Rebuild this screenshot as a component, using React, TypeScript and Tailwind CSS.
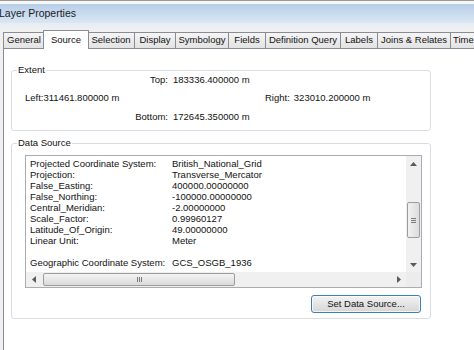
import type { FC } from "react";

const tabs: { label: string; w: number; active?: boolean }[] = [
	{ label: "General", w: 41 },
	{ label: "Source", w: 44, active: true },
	{ label: "Selection", w: 46 },
	{ label: "Display", w: 41 },
	{ label: "Symbology", w: 53 },
	{ label: "Fields", w: 37 },
	{ label: "Definition Query", w: 75 },
	{ label: "Labels", w: 37 },
	{ label: "Joins & Relates", w: 73 },
	{ label: "Time", w: 40 },
];

const rows: [string, string][] = [
	["Projected Coordinate System:", "British_National_Grid"],
	["Projection:", "Transverse_Mercator"],
	["False_Easting:", "400000.00000000"],
	["False_Northing:", "-100000.00000000"],
	["Central_Meridian:", "-2.00000000"],
	["Scale_Factor:", "0.99960127"],
	["Latitude_Of_Origin:", "49.00000000"],
	["Linear Unit:", "Meter"],
	["", ""],
	["Geographic Coordinate System:", "GCS_OSGB_1936"],
];

// small grip lines on scrollbar thumbs
const Grip: FC<{ vertical?: boolean }> = ({ vertical }) => (
	<div className={vertical ? "flex flex-col gap-[1px]" : "flex gap-[1px]"}>
		{[0, 1, 2].map((i) => (
			<div
				key={i}
				className={vertical ? "w-[5px] h-[1px] bg-[#7a7a7a]" : "w-[1px] h-[5px] bg-[#7a7a7a]"}
			/>
		))}
	</div>
);

const Arrow: FC<{ dir: "up" | "down" | "left" | "right" }> = ({ dir }) => {
	const pts = {
		up: "0,4 3.5,0 7,4",
		down: "0,0 3.5,4 7,0",
		left: "4,0 0,3.5 4,7",
		right: "0,0 4,3.5 0,7",
	}[dir];
	const vert = dir === "up" || dir === "down";
	return (
		<svg width={vert ? 7 : 4} height={vert ? 4 : 7} viewBox={vert ? "0 0 7 4" : "0 0 4 7"}>
			<polygon points={pts} fill="#5a5a5a" />
		</svg>
	);
};

const GroupBox: FC<{ label: string; className: string; children: React.ReactNode }> = ({
	label,
	className,
	children,
}) => (
	<div className={`relative ml-[7px] w-[420px] rounded-[3px] border border-[#d9dde2] ${className}`}>
		<span className="absolute left-[5px] -top-[7px] bg-white px-[1px] leading-[12px]">{label}</span>
		{children}
	</div>
);

const App: FC = () => {
	return (
		<div
			className="w-[474px] h-[350px] overflow-hidden bg-[#f0f0f0] flex flex-col text-[9.5px] text-[#111]"
			style={{ fontFamily: '"Liberation Sans", Arial, sans-serif' }}
		>
			{/* strip of the window behind */}
			<div className="h-[4px] bg-[#f7f7f7] border-t border-[#9a9a9a]" />

			{/* title bar */}
			<div className="h-[19px] bg-gradient-to-b from-[#b7cee8] to-[#dae7f4] flex items-center -ml-[1px] text-[10.5px] text-[#1b1b1b]">
				Layer Properties
			</div>
			<div className="h-[7px] bg-gradient-to-b from-[#e6edf5] to-[#f0f0f0]" />

			{/* tabs */}
			<div className="h-[18px] flex items-end pl-[3px]">
				{tabs.map((t, i) =>
					t.active ? (
						<div
							key={t.label}
							className="relative -mb-[1px] h-[19px] shrink-0 bg-white border-t border-l border-r border-[#898c95] flex justify-center pt-[2px] -mx-[1px]"
							style={{ width: t.w + 2 }}
						>
							{t.label}
						</div>
					) : (
						<div
							key={t.label}
							className={`h-[16px] shrink-0 bg-gradient-to-b from-[#f5f5f5] to-[#e3e3e3] border-t border-l border-[#898c95] flex items-center ${
								i === tabs.length - 1 ? "justify-start pl-[2px]" : "justify-center"
							} ${tabs[i - 1]?.active ? "border-l-0" : ""}`}
							style={{ width: t.w }}
						>
							{t.label}
						</div>
					),
				)}
			</div>

			{/* tab page */}
			<div className="flex-1 ml-[3px] bg-white border-l border-t border-[#898c95]">
				<GroupBox label="Extent" className="mt-[21px] h-[61px]">
					<div className="flex h-[11px] mt-[4px] items-center">
						<span className="w-[156px] text-right">Top:</span>
						<span className="ml-[5px]">183336.400000 m</span>
					</div>
					<div className="flex h-[11px] mt-[7px] items-center">
						<span className="ml-[13px] w-[240px]">Left:311461.800000 m</span>
						<span>Right:</span>
						<span className="ml-[4px]">323010.200000 m</span>
					</div>
					<div className="flex h-[11px] mt-[8px] items-center">
						<span className="w-[156px] text-right">Bottom:</span>
						<span className="ml-[5px]">172645.350000 m</span>
					</div>
				</GroupBox>

				<GroupBox label="Data Source" className="mt-[12px] h-[176px]">
					{/* list box */}
					<div className="ml-[13px] mt-[11px] w-[397px] h-[133px] border border-[#a9adb3] flex flex-col">
						<div className="flex flex-1">
							<div className="flex-1 pl-[4px] pt-[3px] overflow-hidden">
								{rows.map(([k, v], i) => (
									<div key={i} className="flex h-[11px] items-center whitespace-nowrap">
										<span className="w-[142px]">{k}</span>
										<span>{v}</span>
									</div>
								))}
							</div>
							{/* vertical scrollbar */}
							<div className="w-[15px] bg-[#f0f0f0] flex flex-col items-center">
								<div className="h-[15px] flex items-center justify-center">
									<Arrow dir="up" />
								</div>
								<div className="mt-[31px] w-[13px] h-[36px] rounded-[2px] border border-[#9c9c9c] bg-gradient-to-r from-[#f2f2f2] to-[#dcdcdc] flex items-center justify-center">
									<Grip vertical />
								</div>
								<div className="flex-1" />
								<div className="h-[15px] flex items-center justify-center">
									<Arrow dir="down" />
								</div>
							</div>
						</div>
						{/* horizontal scrollbar */}
						<div className="h-[15px] flex bg-[#f0f0f0]">
							<div className="flex-1 flex items-center">
								<div className="w-[15px] flex justify-center">
									<Arrow dir="left" />
								</div>
								<div className="ml-[2px] w-[192px] h-[13px] rounded-[2px] border border-[#9c9c9c] bg-gradient-to-b from-[#f4f4f4] to-[#dadada] flex items-center justify-center">
									<Grip />
								</div>
								<div className="flex-1" />
								<div className="w-[15px] flex justify-center">
									<Arrow dir="right" />
								</div>
							</div>
							<div className="w-[15px] bg-[#ececec]" />
						</div>
					</div>

					<div className="flex justify-end mr-[9px] mt-[7px]">
						<button className="w-[110px] h-[18px] rounded-[3px] border border-[#3c7fb1] bg-gradient-to-b from-[#f3f3f3] to-[#d6d6d6] shadow-[inset_0_0_0_1px_#ffffffb0] text-[9.5px] text-[#111] flex items-center justify-center">
							Set Data Source...
						</button>
					</div>
				</GroupBox>
			</div>
		</div>
	);
};

export default App;
